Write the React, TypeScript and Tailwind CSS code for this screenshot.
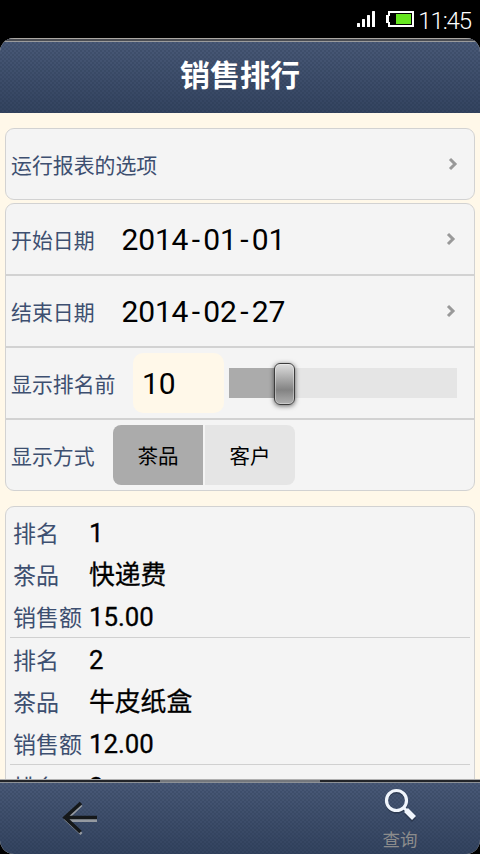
import type { ReactNode } from "react";

interface RankItem {
  rank: string;
  product?: string;
  amount?: string;
}

const RANKING: RankItem[] = [
  { rank: "1", product: "快递费", amount: "15.00" },
  { rank: "2", product: "牛皮纸盒", amount: "12.00" },
  { rank: "3" },
];

function StatusBar() {
  return (
    <div className="flex h-[38px] shrink-0 items-center justify-end bg-black pt-1 pr-[9px]">
      <svg width="18" height="16" viewBox="0 0 18 16" fill="#fff" className="mr-[11px] -mt-1">
        <rect x="0" y="12" width="3" height="4" rx="0.5" />
        <rect x="5" y="8" width="3" height="8" rx="0.5" />
        <rect x="10" y="4" width="3" height="12" rx="0.5" />
        <rect x="15" y="0" width="3" height="16" rx="0.5" />
      </svg>
      <svg width="28" height="16" viewBox="0 0 28 16" className="mr-[4px] -mt-1">
        <path d="M0 4h2V0h26v16H2v-4H0z" fill="#fff" />
        <path d="M4 2h22v12H4v-3H3V5h1z" fill="#000" />
        <rect x="10" y="3" width="15" height="10" fill="#66e620" />
      </svg>
      <span className="text-[24px] leading-none font-light tracking-[-1.1px] text-white">11:45</span>
    </div>
  );
}

function Chevron() {
  return (
    <svg width="10" height="14" viewBox="0 0 10 14" fill="none" className="shrink-0">
      <path d="M2 2l5 5-5 5" stroke="#999" strokeWidth="3" />
    </svg>
  );
}

function FormRow({ label, children }: { label: string; children: ReactNode }) {
  return (
    <div className="flex h-[72px] items-center border-b-2 border-[#d2d2d2] pl-[5px] last:h-[70px] last:border-b-0">
      <span className="pt-[5px] text-[20.9px] leading-none whitespace-nowrap text-[#3d4f70]">
        {label}
      </span>
      {children}
    </div>
  );
}

function DateRow({ label, value }: { label: string; value: string }) {
  const [year, month, day] = value.split("-");
  return (
    <FormRow label={label}>
      <span className="ml-[27px] flex-1 pt-[1px] text-[30px] leading-none tracking-[-0.2px]">
        {year}
        <span className="mx-[3.5px]">-</span>
        {month}
        <span className="mx-[3.5px]">-</span>
        {day}
      </span>
      <div className="mr-[18px]">
        <Chevron />
      </div>
    </FormRow>
  );
}

function Field({ label, value }: { label: string; value: string }) {
  return (
    <div className="flex h-[42px] items-center pt-[3px]">
      <span className="w-[76px] pt-[1px] text-[23px] leading-none whitespace-nowrap text-[#3d4f70]">
        {label}
      </span>
      <span className="text-[25.8px] leading-none [-webkit-text-stroke:0.3px_#000]">{value}</span>
    </div>
  );
}

// Fine crosshatch shared by the header and the toolbar
function Weave({ id }: { id: string }) {
  return (
    <svg className="absolute inset-0 h-full w-full">
      <defs>
        <pattern id={id} width="4" height="4" patternUnits="userSpaceOnUse">
          <rect width="2" height="2" fill="#1c2b45" opacity="0.18" />
          <rect x="2" y="2" width="2" height="2" fill="#1c2b45" opacity="0.18" />
        </pattern>
      </defs>
      <rect width="100%" height="100%" fill={`url(#${id})`} />
    </svg>
  );
}

export default function App() {
  return (
    <div className="flex h-[854px] w-[480px] flex-col overflow-hidden bg-black font-['Roboto','Noto_Sans_CJK_SC',sans-serif] text-black">
      <StatusBar />

      <div className="flex min-h-0 flex-1 flex-col overflow-hidden rounded-[14px] bg-[#fff8e9]">
        {/* Header */}
        <header className="relative flex h-[75px] shrink-0 flex-col bg-linear-to-b from-[#4a5a78] to-[#33435f]">
          <Weave id="weave-top" />
          <div className="relative h-px bg-[#aaa7a2]" />
          <div className="relative h-[2px] bg-[#4b4d53]" />
          <div className="relative h-px bg-[#9b9b9c]" />
          <h1 className="relative flex flex-1 items-center justify-center pb-[3px] text-[30px] leading-none font-bold text-white">
            销售排行
          </h1>
        </header>

        <main className="min-h-0 flex-1 overflow-hidden px-[5px] pt-[15px]">
          <section className="flex h-[72px] items-center justify-between rounded-[9px] border border-[#d2d2d2] bg-[#f4f4f4] pr-[16px] pl-[5px]">
            <span className="pt-[5px] text-[20.9px] leading-none text-[#3d4f70]">
              运行报表的选项
            </span>
            <Chevron />
          </section>

          <section className="mt-[3px] rounded-[9px] border border-[#d2d2d2] bg-[#f4f4f4]">
            <DateRow label="开始日期" value="2014-01-01" />
            <DateRow label="结束日期" value="2014-02-27" />
            <FormRow label="显示排名前">
              <div className="ml-[17.5px] flex h-[60px] w-[91px] items-center rounded-[10px] bg-[#fff8e9] pt-[1px] pl-[9px] text-[30px] leading-none">
                10
              </div>
              <div className="relative ml-[5px] flex h-[30px] w-[228px] bg-[#e5e5e5]">
                <div className="w-[55px] bg-[#ababab]" />
                <div className="absolute top-[-5px] left-[45px] h-[42px] w-[21px] rounded-[6px] border border-[#3c3c3c] bg-linear-to-b from-[#dedede] via-[#838383] via-65% to-[#b0b0b0] shadow-[0_1px_5px_rgba(0,0,0,0.6),inset_0_0_0_1px_rgba(255,255,255,0.35)]" />
              </div>
            </FormRow>
            <FormRow label="显示方式">
              <div className="ml-[18.5px] flex gap-[2px] text-[20.5px] leading-none">
                <div className="flex h-[60px] w-[90px] items-center justify-center rounded-l-[8px] bg-[#ababab] pt-[5px]">
                  茶品
                </div>
                <div className="flex h-[60px] w-[90px] items-center justify-center rounded-r-[8px] bg-[#e5e5e5] pt-[5px]">
                  客户
                </div>
              </div>
            </FormRow>
          </section>

          <section className="mt-[15px] rounded-[9px] border border-[#d2d2d2] bg-[#f4f4f4] px-1 pt-[4px]">
            {RANKING.map((item) => (
              <div key={item.rank} className="border-b border-[#d0d0d0] pl-[3px]">
                <Field label="排名" value={item.rank} />
                {item.product && <Field label="茶品" value={item.product} />}
                {item.amount && <Field label="销售额" value={item.amount} />}
              </div>
            ))}
          </section>
        </main>

        {/* Toolbar */}
        <footer className="relative flex h-[75px] shrink-0 flex-col bg-linear-to-b from-[#4a5a78] to-[#33435f]">
          <Weave id="weave-bottom" />
          <div className="relative h-px bg-[#b0b0b0]" />
          <div className="relative grid h-[2px] grid-cols-3 bg-[#222428]">
            <div className="col-start-2 bg-[#74777c]" />
          </div>
          <div className="relative h-px bg-[#8d9196]" />
          <div className="relative grid flex-1 grid-cols-3">
            <div className="flex justify-center pt-[16px]">
              <svg width="38" height="40" viewBox="0 0 38 40" fill="none">
                <path d="M20.500 6L5 20.500l15.500 14.500M5 21.500h31" stroke="#959aa1" strokeWidth="3" />
                <path d="M20 4L4 18.500l15.500 14.500M5 18.500h31" stroke="#15181a" strokeWidth="3.600" />
              </svg>
            </div>
            <div />
            <div className="flex flex-col items-center pt-[4px]">
              <svg width="34" height="36" viewBox="0 0 34 36" fill="none">
                <g stroke="#1c2638" opacity="0.500">
                  <circle cx="13.500" cy="15" r="10" strokeWidth="3" />
                  <path d="M20.500 22l3 3" strokeWidth="3" />
                  <path d="M23 25l8 8" strokeWidth="5.500" />
                </g>
                <g stroke="#f0f5fc">
                  <circle cx="13.500" cy="13.500" r="10" strokeWidth="3.200" />
                  <path d="M20.500 20.500l3 3" strokeWidth="3" />
                  <path d="M23 23l8 8" strokeWidth="5.500" />
                </g>
              </svg>
              <span className="mt-[9px] text-[17.500px] leading-none text-[#8c8c8c]">查询</span>
            </div>
          </div>
        </footer>
      </div>
    </div>
  );
}
